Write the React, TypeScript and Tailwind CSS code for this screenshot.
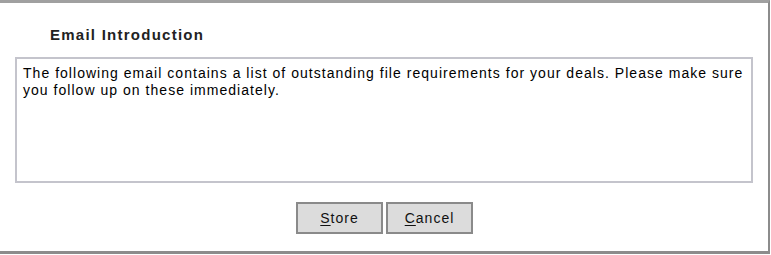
export default function App() {
  return (
    <div className="w-[771px] h-[255px] bg-white" style={{ fontFamily: '"Liberation Sans", Arial, sans-serif' }}>
      <div className="h-[254px] w-[770px] border-t-[3px] border-r-2 border-b-[3px] border-t-[#a0a0a0] border-r-[#8c8c8c] border-b-[#8c8c8c] bg-white flex flex-col">
        {/* Heading */}
        <h2 className="pl-[50px] pt-[23px] text-[15px] tracking-[1.25px] font-bold text-[#222] leading-[17px]">Email Introduction</h2>

        {/* Body text box */}
        <div className="mx-[15px] mt-[14px] h-[126px] border-2 border-[#c4c4cc] pl-[6px] pr-[2px] pt-[6px] text-[14px] tracking-[1.03px] leading-[17px] text-black">
          The following email contains a list of outstanding file requirements for your deals. Please make sure you follow up on these immediately.
        </div>

        {/* Actions */}
        <div className="flex justify-center gap-[3px] mt-[19px] pl-[1px]">
          <button className="w-[87px] h-[32px] bg-[#dcdcdc] border-2 border-[#8a8a8a] text-[14px] tracking-[1px] text-[#111]">
            <span className="underline underline-offset-2">S</span>tore
          </button>
          <button className="w-[87px] h-[32px] bg-[#dcdcdc] border-2 border-[#8a8a8a] text-[14px] tracking-[1px] text-[#111]">
            <span className="underline underline-offset-2">C</span>ancel
          </button>
        </div>
      </div>
    </div>
  );
}
